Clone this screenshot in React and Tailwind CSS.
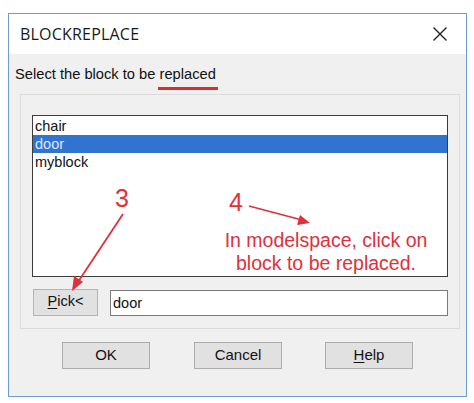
import React from "react";

export default function App() {
  const ui = { fontFamily: '"Liberation Sans", Arial, sans-serif' };
  const title = { fontFamily: '"Open Sans", "Noto Sans", sans-serif' };
  return (
    <div className="w-[474px] h-[403px] bg-white pt-[13px] pl-[8px] relative overflow-hidden" style={ui}>
      <div className="w-[459px] h-[384px] border border-[#6e9bd8] flex flex-col bg-[#f0f0f0]">
        <div className="h-[40px] bg-white flex items-center justify-between pl-[11px] pr-[14px] shrink-0">
          <span className="text-[16px] text-[#1a1a1a] tracking-[0.2px]" style={title}>BLOCKREPLACE</span>
          <svg width="16" height="16" viewBox="0 0 16 16" className="mr-[4px]">
            <path d="M1.5 1.5 L14.5 14.5 M14.5 1.5 L1.5 14.5" stroke="#222" strokeWidth="1.4" fill="none" />
          </svg>
        </div>
        <div className="pl-[6px] pt-[11px] h-[30px] text-[14.7px] leading-[19px] text-[#111] shrink-0">
          Select the block to be <span className="relative">replaced<span className="absolute left-[-2px] right-[-2px] top-[21px] h-[3px] bg-[#e02a2a]"></span></span>
        </div>
        <div className="ml-[11px] mt-[10px] w-[440px] h-[235px] border border-[#dcdcdc] pl-[11px] pt-[20px] shrink-0">
          <div className="w-[416px] h-[162px] border border-[#3c3c3c] bg-white pt-[1px] text-[14.5px] leading-[18px]">
            <div className="pl-[2px] text-[#111]">chair</div>
            <div className="pl-[2px] bg-[#3174d0] text-[#dde9f9]">door</div>
            <div className="pl-[2px] text-[#111]">myblock</div>
          </div>
          <div className="flex items-center mt-[11px]">
            <div className="w-[65px] h-[27px] ml-[1px] bg-[#e1e1e1] border border-[#b4b4b4] flex items-center justify-center text-[14.5px] text-[#111]">
              <span><span className="underline underline-offset-2">P</span>ick&lt;</span>
            </div>
            <div className="ml-[12px] w-[338px] h-[26px] border border-[#7a7a7a] bg-white text-[14.5px] leading-[24px] pl-[2px] text-[#111] mt-[2px]">door</div>
          </div>
        </div>
        <div className="flex pl-[53px] mt-[13px]">
          <div className="w-[88px] h-[27px] bg-[#e1e1e1] border border-[#adadad] flex items-center justify-center text-[15px] text-[#111]">OK</div>
          <div className="w-[88px] h-[27px] ml-[44px] bg-[#e1e1e1] border border-[#adadad] flex items-center justify-center text-[15px] text-[#111]">Cancel</div>
          <div className="w-[88px] h-[27px] ml-[43px] bg-[#e1e1e1] border border-[#adadad] flex items-center justify-center text-[15px] text-[#111]">
            <span><span className="underline underline-offset-2">H</span>elp</span>
          </div>
        </div>
      </div>

      <svg className="absolute left-0 top-0" width="474" height="403" viewBox="0 0 474 403">
        <path d="M123 214 L78 282" stroke="#e0303c" strokeWidth="1.8" fill="none" />
        <path d="M72 291 L74 276 L83 282 Z" fill="#e0303c" />
        <path d="M249 206 L302 220" stroke="#e0303c" strokeWidth="1.8" fill="none" />
        <path d="M310 223 L297 225 L300 215 Z" fill="#e0303c" />
      </svg>
      <div className="absolute left-[115px] top-[184px] text-[25px] leading-[28px] text-[#e0303c]">3</div>
      <div className="absolute left-[229px] top-[188px] text-[25px] leading-[28px] text-[#e0303c]">4</div>
      <div className="absolute left-[206px] top-[229px] w-[240px] text-center text-[19.5px] leading-[23px] text-[#e0303c]">
        In modelspace, click on<br />block to be replaced.
      </div>
    </div>
  );
}
